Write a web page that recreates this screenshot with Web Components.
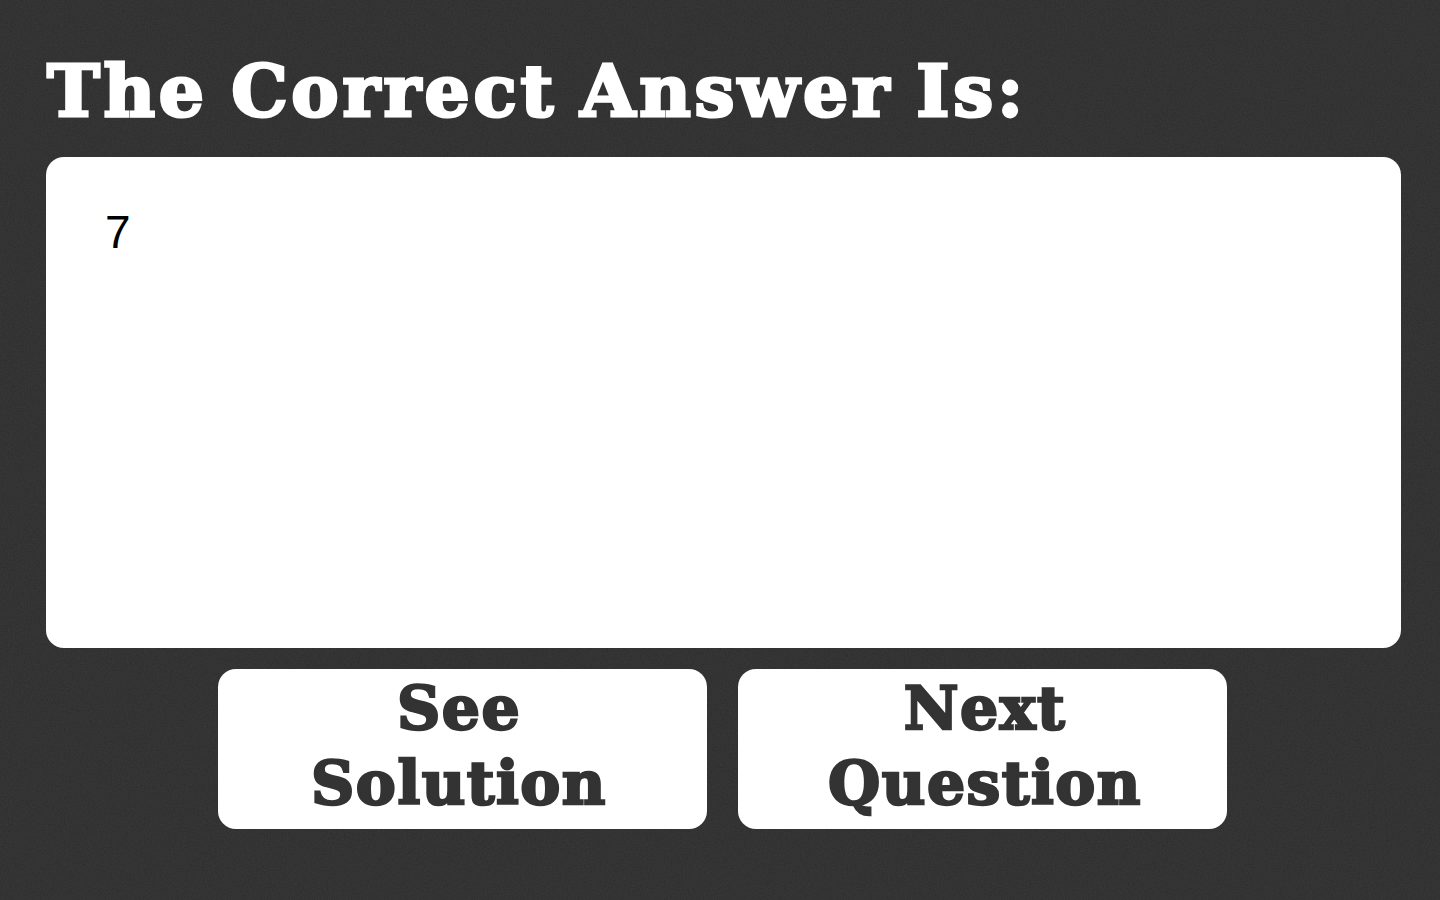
<!DOCTYPE html>
<html>
<head>
<meta charset="utf-8">
<title>The Correct Answer Is</title>
<style>
  html, body { margin: 0; height: 100%; background: #343434; }
</style>
</head>
<body>
<quiz-answer-page>
  <span slot="title">The Correct Answer Is:</span>
  <answer-box>7</answer-box>
  <quiz-button slot="actions" style="--nudge: -6px">See Solution</quiz-button>
  <quiz-button slot="actions" style="--nudge: 6px">Next Question</quiz-button>
</quiz-answer-page>
<script>
// QuizAnswerPage.js;
customElements.define(
  "quiz-answer-page",
  class QuizAnswerPage extends HTMLElement {
    constructor() {
      super();
      const template = document.createElement("template");
      template.innerHTML = `
      <style>
        :host {
          display: block;
          box-sizing: border-box;
          height: 900px;
          overflow: hidden;
          padding: 46px 39px 0 46px;
          background-color: #363636;
          position: relative;
        }
        .noise {
          position: absolute;
          inset: 0;
          width: 100%;
          height: 100%;
        }
        .content {
          position: relative;
        }
        h1 {
          margin: 0 0 21px;
          padding-left: 1px;
          height: 90px;
          font: bold 71px/90px "DejaVu Serif", serif;
          letter-spacing: 3.7px;
          word-spacing: -5px;
          color: #fff;
          -webkit-text-stroke: 3px #fff;
          white-space: nowrap;
        }
        .actions {
          display: flex;
          justify-content: center;
          gap: 31px;
          margin-top: 21px;
          padding-right: 3px;
        }
      </style>
      <svg class="noise" aria-hidden="true">
        <filter id="grain">
          <feTurbulence type="fractalNoise" baseFrequency="0.7" numOctaves="2" seed="4"></feTurbulence>
          <feColorMatrix type="matrix" values="0 0 0 0 0  0 0 0 0 0  0 0 0 0 0  0.3 0 0 0 -0.1"></feColorMatrix>
        </filter>
        <rect width="100%" height="100%" filter="url(#grain)"></rect>
      </svg>
      <div class="content">
        <h1><slot name="title"></slot></h1>
        <slot></slot>
        <div class="actions"><slot name="actions"></slot></div>
      </div>
      `;
      this.attachShadow({ mode: "open" }).appendChild(
        template.content.cloneNode(true)
      );
    }
  }
);

// AnswerBox.js;
customElements.define(
  "answer-box",
  class AnswerBox extends HTMLElement {
    constructor() {
      super();
      const template = document.createElement("template");
      template.innerHTML = `
      <style>
        :host {
          display: block;
          box-sizing: border-box;
          height: 491px;
          padding: 50px 59px;
          border-radius: 18px;
          background-color: #fff;
          color: #000;
          font: 46px/50px "Liberation Sans", sans-serif;
        }
      </style>
      <slot></slot>
      `;
      this.attachShadow({ mode: "open" }).appendChild(
        template.content.cloneNode(true)
      );
    }
  }
);

// QuizButton.js;
customElements.define(
  "quiz-button",
  class QuizButton extends HTMLElement {
    constructor() {
      super();
      const template = document.createElement("template");
      template.innerHTML = `
      <style>
        :host {
          display: block;
          box-sizing: border-box;
          width: 489px;
          height: 160px;
          padding: 2px 60px 0 calc(60px + var(--nudge, 0px));
          border-radius: 18px;
          background-color: #fff;
          color: #333;
          font: bold 60px/75px "DejaVu Serif", serif;
          letter-spacing: 1.5px;
          -webkit-text-stroke: 2.5px #333;
          text-align: center;
          cursor: pointer;
        }
      </style>
      <slot></slot>
      `;
      this.attachShadow({ mode: "open" }).appendChild(
        template.content.cloneNode(true)
      );
    }
  }
);
</script>
</body>
</html>
